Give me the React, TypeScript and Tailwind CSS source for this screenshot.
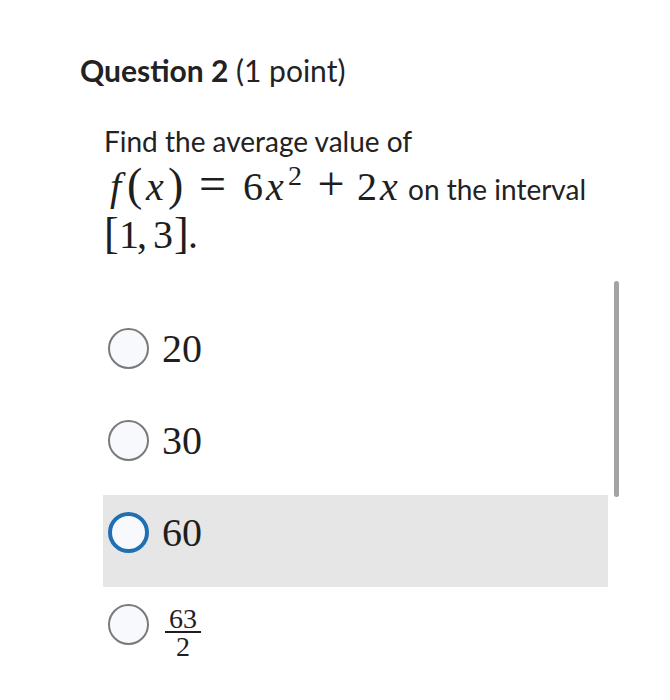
import React from 'react';

const serif = "font-['Liberation_Serif',serif]";

const Radio = ({ selected }: { selected?: boolean }) => (
  <span
    className={`block shrink-0 w-[41px] h-[41px] rounded-full bg-[#f8f9fd] ${
      selected ? 'border-[4px] border-[#1f6fb2]' : 'border-[2px] border-[#7a7a7a]'
    }`}
  />
);

const Option = ({ children, selected }: { children: React.ReactNode; selected?: boolean }) => (
  <div className={`flex items-start h-[92px] pt-[17px] pl-[5px] ${selected ? 'bg-[#e6e6e6]' : ''}`}>
    <Radio selected={selected} />
    <div className={`ml-[13px] h-[41px] flex items-center ${serif} text-[40px] text-[#1e1e1e] leading-none`}>
      {children}
    </div>
  </div>
);

// one glyph of the formula in its own box so spacing follows the reference
const G = ({ w, children, className = '' }: { w: string; children: React.ReactNode; className?: string }) => (
  <span className={`inline-block text-center ${w} ${className}`}>{children}</span>
);

export default function App() {
  return (
    <div className="relative min-h-[700px] bg-white font-['Lato',sans-serif] text-[#222]">
      <div className="pl-[80px] pt-[50px]">
        <h2 className="text-[30px] leading-[40px]">
          <span className="font-bold">Question 2</span> (1 point)
        </h2>

        <div className="pl-[24px] mt-[27px] text-[28px] leading-[48px]">
          <div className="h-[48px]">Find the average value of</div>
          <div className="h-[48px] whitespace-nowrap">
            <span className={`${serif} text-[40px] leading-[0.6] text-[#1e1e1e]`}>
              <G w="w-[23px]" className="italic">f</G>
              <G w="w-[15px]" className="text-[46px]">(</G>
              <G w="w-[26px]" className="italic">x</G>
              <G w="w-[14px]" className="text-[46px]">)</G>
              <G w="w-[61px]" className="text-[48px]">=</G>
              <G w="w-[20px]">6</G>
              <G w="w-[24px]" className="italic">x</G>
              <G w="w-[18px]" className="text-left pl-[1px] text-[28px] relative -top-[15px]">2</G>
              <G w="w-[52px]" className="text-[48px]">+</G>
              <G w="w-[20px]">2</G>
              <G w="w-[24px]" className="italic">x</G>
            </span>
            <span className="ml-[7px]">on the interval</span>
          </div>
          <div className="h-[48px]">
            <span className={`${serif} text-[40px] leading-[0.6] text-[#1e1e1e]`}>
              <G w="w-[15px]" className="text-left text-[44px]">[</G>
              <G w="w-[17px]" className="text-left">1</G>
              <G w="w-[17px]" className="text-left pl-[1px]">,</G>
              <G w="w-[21px]" className="text-left">3</G>
              <G w="w-[14px]" className="text-[44px]">]</G>
              <G w="w-[10px]" className="text-left">.</G>
            </span>
          </div>
        </div>

        <div className="mt-[50px] ml-[23px] w-[505px]">
          <Option>20</Option>
          <Option>30</Option>
          <Option selected>60</Option>
          <Option>
            <span className="self-start ml-[3px] mt-[3px] inline-flex flex-col items-center text-[28px] leading-[24px]">
              <span className="h-[24px] px-[4px]">63</span>
              <span className="block w-full h-[2px] bg-[#1e1e1e]" />
              <span className="h-[24px] mt-[2px]">2</span>
            </span>
          </Option>
        </div>
      </div>

      <div className="absolute left-[614px] top-[281px] w-[5px] h-[216px] rounded-full bg-[#a3a3a3]" />
    </div>
  );
}
